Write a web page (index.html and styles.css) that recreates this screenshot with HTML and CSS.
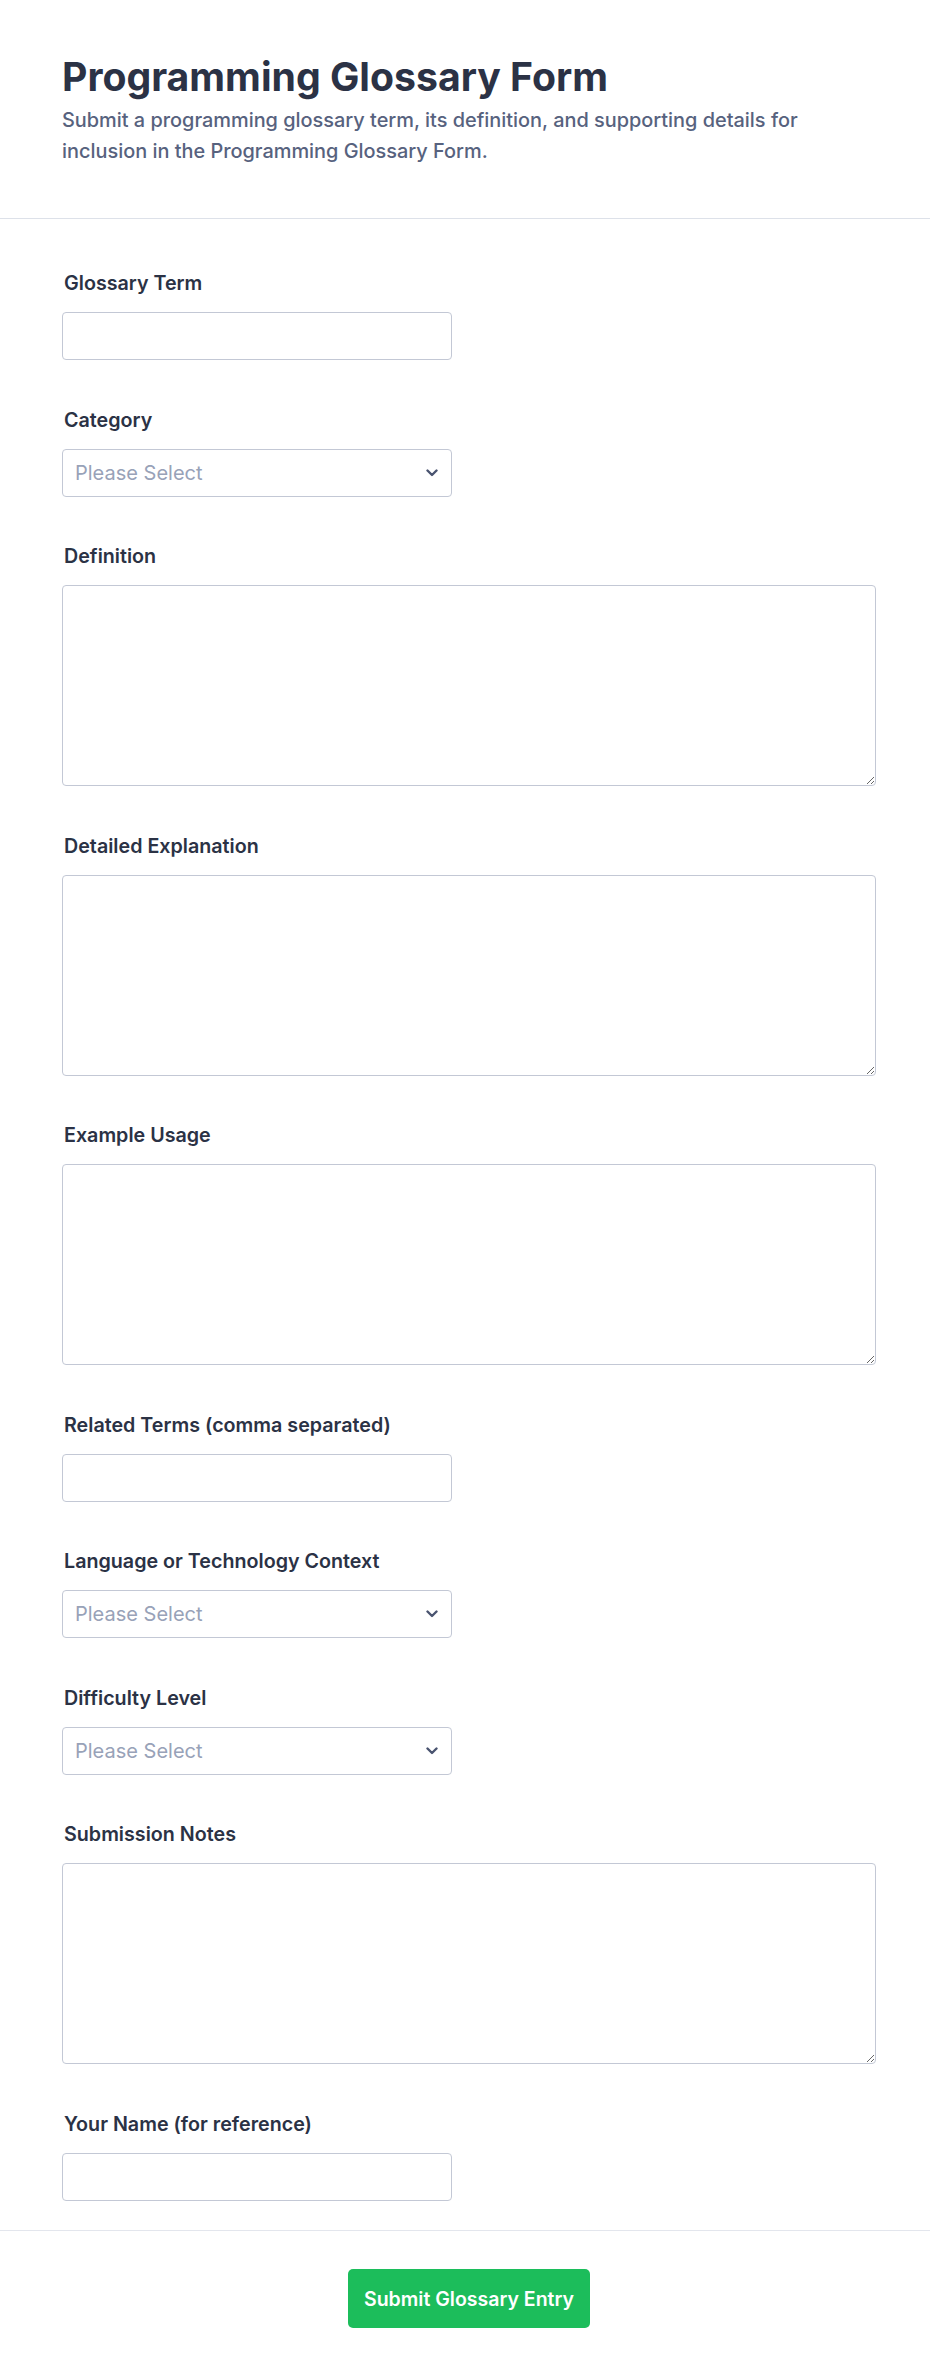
FILE: index.html
```html
<!DOCTYPE html>
<html lang="en">
<head>
<meta charset="utf-8">
<title>Programming Glossary Form</title>
<link rel="stylesheet" href="styles.css">
</head>
<body>
<form class="page">
  <header class="header">
    <h1 class="title">Programming Glossary Form</h1>
    <p class="subtitle">Submit a programming glossary term, its definition, and supporting details for inclusion in the Programming Glossary Form.</p>
  </header>

  <section class="fields">
    <div class="field">
      <label class="label" for="term">Glossary Term</label>
      <input class="control short" id="term" type="text">
    </div>

    <div class="field">
      <label class="label" for="category">Category</label>
      <div class="select-wrap short">
        <select class="control select" id="category"><option>Please Select</option></select>
        <svg class="chevron" viewBox="0 0 12 8" width="12" height="8"><path d="M1.5 1.5 L6 6 L10.5 1.5" fill="none" stroke="#4a5470" stroke-width="2.4" stroke-linecap="round" stroke-linejoin="round"/></svg>
      </div>
    </div>

    <div class="field">
      <label class="label" for="definition">Definition</label>
      <textarea class="control area" id="definition"></textarea>
    </div>

    <div class="field">
      <label class="label" for="explanation">Detailed Explanation</label>
      <textarea class="control area" id="explanation"></textarea>
    </div>

    <div class="field">
      <label class="label" for="example">Example Usage</label>
      <textarea class="control area" id="example"></textarea>
    </div>

    <div class="field">
      <label class="label" for="related">Related Terms (comma separated)</label>
      <input class="control short" id="related" type="text">
    </div>

    <div class="field">
      <label class="label" for="context">Language or Technology Context</label>
      <div class="select-wrap short">
        <select class="control select" id="context"><option>Please Select</option></select>
        <svg class="chevron" viewBox="0 0 12 8" width="12" height="8"><path d="M1.5 1.5 L6 6 L10.5 1.5" fill="none" stroke="#4a5470" stroke-width="2.4" stroke-linecap="round" stroke-linejoin="round"/></svg>
      </div>
    </div>

    <div class="field">
      <label class="label" for="difficulty">Difficulty Level</label>
      <div class="select-wrap short">
        <select class="control select" id="difficulty"><option>Please Select</option></select>
        <svg class="chevron" viewBox="0 0 12 8" width="12" height="8"><path d="M1.5 1.5 L6 6 L10.5 1.5" fill="none" stroke="#4a5470" stroke-width="2.4" stroke-linecap="round" stroke-linejoin="round"/></svg>
      </div>
    </div>

    <div class="field">
      <label class="label" for="notes">Submission Notes</label>
      <textarea class="control area" id="notes"></textarea>
    </div>

    <div class="field">
      <label class="label" for="name">Your Name (for reference)</label>
      <input class="control short" id="name" type="text">
    </div>
  </section>

  <footer class="footer">
    <button class="submit" type="button">Submit Glossary Entry</button>
  </footer>
</form>
</body>
</html>
```

FILE: styles.css
```css
* {
  box-sizing: border-box;
}

html, body {
  margin: 0;
  padding: 0;
  background: #ffffff;
}

body {
  font-family: "Inter", "Noto Sans", "Liberation Sans", sans-serif;
  color: #2b3245;
}

.page {
  display: flex;
  flex-direction: column;
  margin: 0;
}

.header {
  padding: 53px 54px 51px 62px;
  border-bottom: 1px solid #dde1e9;
}

.title {
  margin: 0;
  font-size: 39.2px;
  line-height: 48px;
  font-weight: 700;
  color: #2b3245;
}

.subtitle {
  margin: 4px 0 0;
  font-size: 19.9px;
  line-height: 31px;
  font-weight: 500;
  color: #57627e;
  max-width: 760px;
}

.fields {
  display: flex;
  flex-direction: column;
  gap: 47.5px;
  padding: 52px 54px 29.5px 62px;
  border-bottom: 1px solid #e3e6ed;
}

.field {
  display: flex;
  flex-direction: column;
  align-items: flex-start;
  gap: 17px;
}

.label {
  display: block;
  padding-left: 2px;
  font-size: 19.7px;
  line-height: 24px;
  font-weight: 600;
  color: #2b3245;
}

.control {
  display: block;
  margin: 0;
  font-family: inherit;
  font-size: 20px;
  color: #2b3245;
  background: #ffffff;
  border: 1px solid #c3c8d5;
  border-radius: 4px;
  outline: none;
}

.short {
  width: 390px;
  height: 48px;
}

input.control {
  padding: 0 12px;
}

.select-wrap {
  position: relative;
}

.select {
  width: 100%;
  height: 48px;
  padding: 0 40px 0 12px;
  appearance: none;
  -webkit-appearance: none;
  color: #98a2b8;
}

.chevron {
  position: absolute;
  right: 14px;
  top: 20px;
  pointer-events: none;
}

.area {
  width: 100%;
  height: 201px;
  padding: 12px;
  resize: vertical;
}

.footer {
  display: flex;
  justify-content: center;
  padding: 38px 54px 50px 62px;
}

.submit {
  height: 59px;
  padding: 0 16px;
  font-family: inherit;
  font-size: 19.5px;
  font-weight: 600;
  color: #ffffff;
  background: #1cbd5b;
  border: none;
  border-radius: 5px;
  cursor: pointer;
}
```
